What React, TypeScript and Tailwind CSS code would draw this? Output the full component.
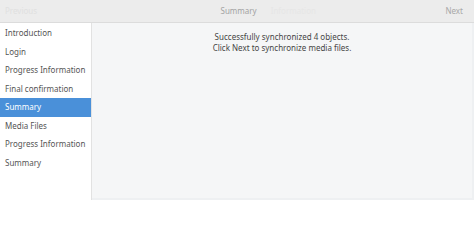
import React from "react";

const items = [
  "Introduction",
  "Login",
  "Progress Information",
  "Final confirmation",
  "Summary",
  "Media Files",
  "Progress Information",
  "Summary",
];

export default function App() {
  return (
    <div
      className="w-[474px] h-[200px] flex flex-col bg-[#f5f6f7] overflow-hidden"
      style={{ fontFamily: '"Noto Sans", sans-serif' }}
    >
      <div className="h-[23px] shrink-0 flex items-center bg-[#ececec] border-b border-[#dcdcdc] text-[8px] relative">
        <span className="pl-[5px] w-[91px] text-[#e0e0e0]">Previous</span>
        <div className="flex-1 flex justify-center">
          <span className="text-[#a3a3a3] mr-[-34px]">Summary</span>
          <span className="text-[#e6e6e6] ml-[48px]">Information</span>
        </div>
        <span className="pr-[11px] text-[#a8a8a8]">Next</span>
      </div>
      <div className="flex flex-1 min-h-0">
        <div className="w-[92px] shrink-0 bg-white border-r border-[#e2e2e2] pt-[1px]">
          {items.map((t, i) => (
            <div
              key={i}
              className={
                "h-[18.5px] flex items-center pl-[5px] text-[8px] " +
                (i === 4 ? "bg-[#4a90d9] text-white" : "text-[#555555]")
              }
            >
              {t}
            </div>
          ))}
        </div>
        <div className="flex-1 flex flex-col items-center pt-[8px] text-[8px] leading-[11px] text-[#454545] border-r-2 border-b-2 border-[#eef0f2]">
          <span>Successfully synchronized 4 objects.</span>
          <span>Click Next to synchronize media files.</span>
        </div>
      </div>
    </div>
  );
}
